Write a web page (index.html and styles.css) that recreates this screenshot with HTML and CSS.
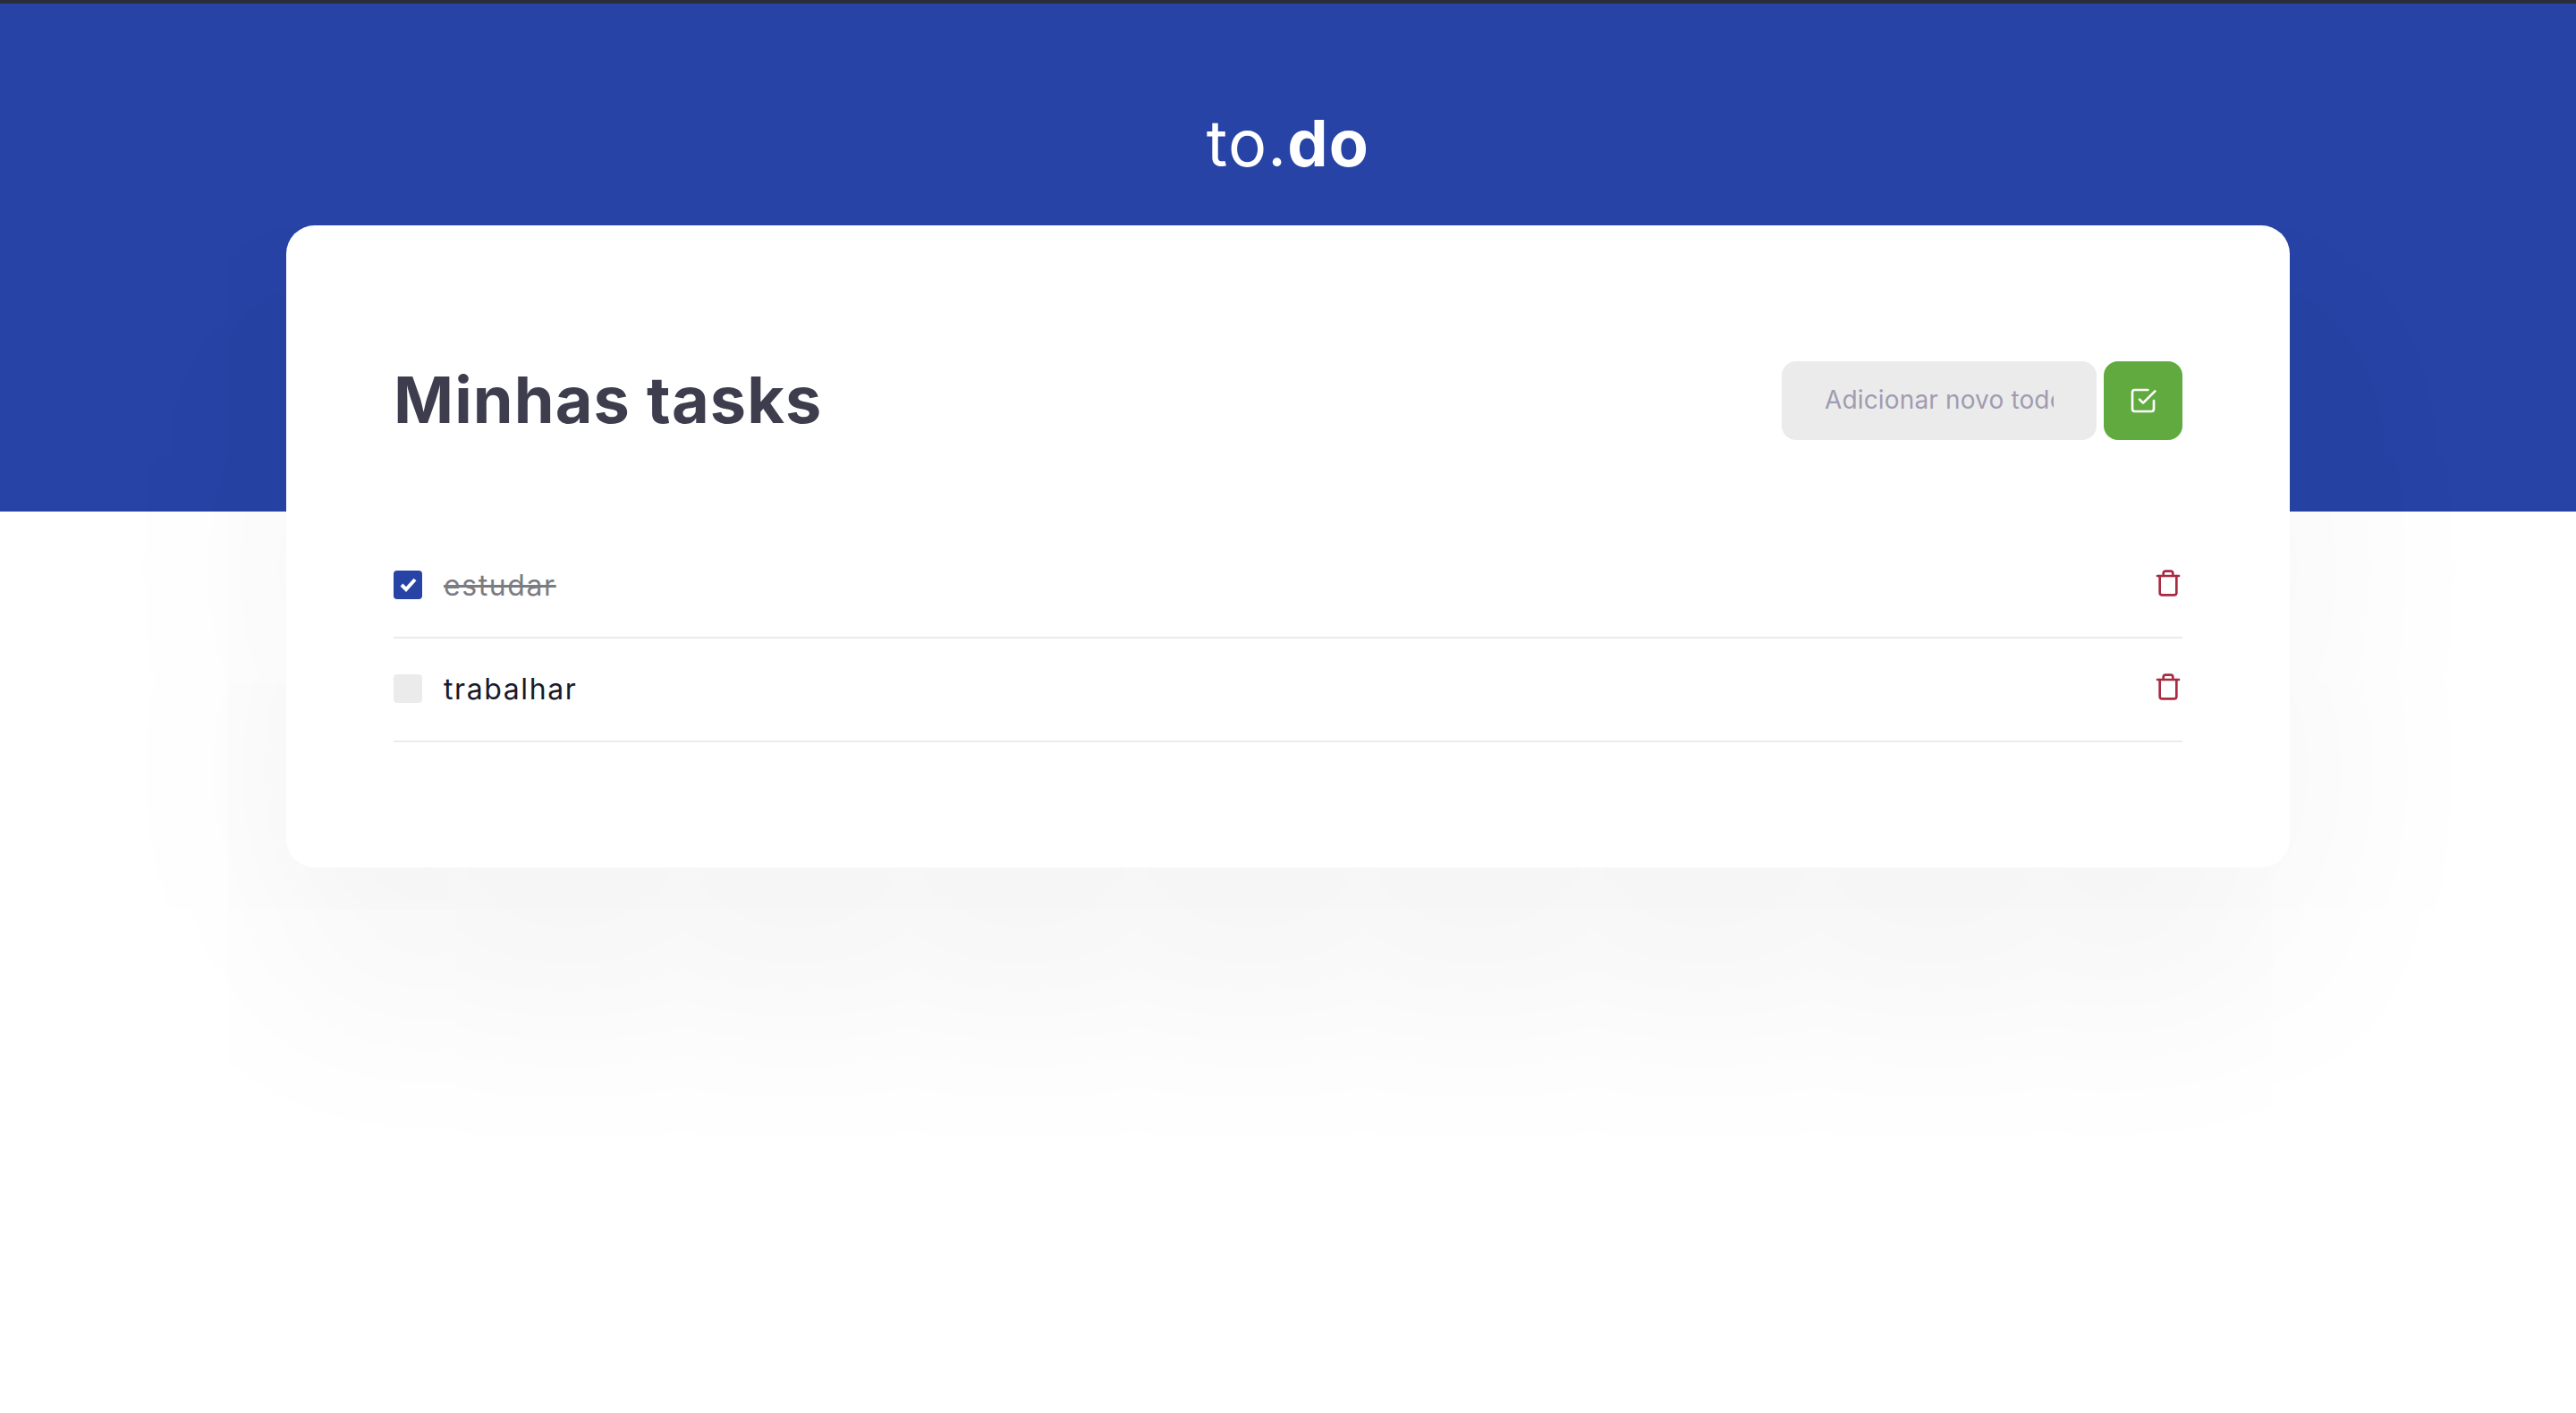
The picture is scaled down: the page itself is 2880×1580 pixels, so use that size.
FILE: index.html
```html
<!DOCTYPE html>
<html lang="pt-BR">
<head>
<meta charset="utf-8">
<title>to.do</title>
<link rel="stylesheet" href="styles.css">
</head>
<body>
<header class="top">
  <div class="logo">to.<b>do</b></div>
</header>
<main class="card">
  <div class="card-head">
    <h1 class="title">Minhas tasks</h1>
    <form class="add">
      <input class="add-input" type="text" placeholder="Adicionar novo todo">
      <button class="add-btn" type="button" aria-label="Adicionar">
        <svg class="icon" viewBox="0 0 24 24"><polyline points="9 11 12 14 22 4"/><path d="M21 12v7a2 2 0 0 1-2 2H5a2 2 0 0 1-2-2V5a2 2 0 0 1 2-2h11"/></svg>
      </button>
    </form>
  </div>
  <ul class="list">
    <li class="row">
      <span class="box box-on"><svg class="tick" viewBox="0 0 32 32"><polyline points="9 16 14 21 24 10"/></svg></span>
      <span class="task task-done">estudar</span>
      <svg class="icon trash" viewBox="0 0 24 24"><path d="M3 6h18"/><path d="M19 6v14a2 2 0 0 1-2 2H7a2 2 0 0 1-2-2V6m3 0V4a2 2 0 0 1 2-2h4a2 2 0 0 1 2 2v2"/></svg>
    </li>
    <li class="row">
      <span class="box"></span>
      <span class="task">trabalhar</span>
      <svg class="icon trash" viewBox="0 0 24 24"><path d="M3 6h18"/><path d="M19 6v14a2 2 0 0 1-2 2H7a2 2 0 0 1-2-2V6m3 0V4a2 2 0 0 1 2-2h4a2 2 0 0 1 2 2v2"/></svg>
    </li>
  </ul>
</main>
</body>
</html>
```

FILE: styles.css
```css
* { box-sizing: border-box; }
html, body { margin: 0; background: #fff; }
body { font-family: Inter, "Liberation Sans", sans-serif; height: 1580px; overflow: hidden; }

.top {
  height: 572px;
  padding-top: 112px;
  background: #2643a5;
  border-top: 4px solid #2b2d3a;
  text-align: center;
}
.logo {
  color: #fff;
  font-size: 72px;
  line-height: 88px;
  font-weight: 400;
  letter-spacing: 1.2px;
}
.logo b { font-weight: 700; }

.card {
  width: 2240px;
  height: 718px;
  margin: -320px auto 0;
  padding: 152px 120px 0;
  background: #fff;
  border-radius: 32px;
  box-shadow: 0 120px 300px rgba(0, 0, 0, .06);
}
.card-head { display: flex; justify-content: space-between; align-items: center; }
.title {
  margin: -2px 0 0;
  color: #3d3d4d;
  font-size: 72px;
  line-height: 88px;
  font-weight: 700;
  letter-spacing: 1.1px;
}
.add { display: flex; gap: 8px; }
.add-input {
  width: 352px;
  height: 88px;
  padding: 0 48px 2px;
  border: 0;
  border-radius: 16px;
  background: #ebebeb;
  font: 400 28px Inter, sans-serif;
  letter-spacing: .15px;
  color: #3d3d4d;
}
.add-input::placeholder { color: #a09cb1; opacity: 1; }
.add-btn {
  display: flex;
  align-items: center;
  justify-content: center;
  width: 88px;
  height: 88px;
  padding: 0;
  border: 0;
  border-radius: 16px;
  background: #60aa3f;
  color: #fff;
}
.icon {
  width: 32px;
  height: 32px;
  fill: none;
  stroke: currentColor;
  stroke-width: 2;
  stroke-linecap: round;
  stroke-linejoin: round;
  flex: none;
}
.list { margin: 106px 0 0; padding: 0; list-style: none; }
.row {
  display: flex;
  align-items: center;
  height: 116px;
  padding-bottom: 2px;
  border-bottom: 2px solid #ebebeb;
}
.box {
  display: block;
  width: 32px;
  height: 32px;
  border-radius: 4px;
  background: #ebebeb;
  flex: none;
}
.box-on { background: #2643a5; }
.tick { display: block; width: 32px; height: 32px; fill: none; stroke: #fff; stroke-width: 4; }
.task {
  margin: 2px 0 0 24px;
  flex: 1;
  font-size: 32px;
  line-height: 40px;
  letter-spacing: 1.6px;
  color: #1a1a2c;
}
.task-done { color: #7b7c82; text-decoration: line-through; }
.trash { color: #a82b42; margin-bottom: 4px; }
```
